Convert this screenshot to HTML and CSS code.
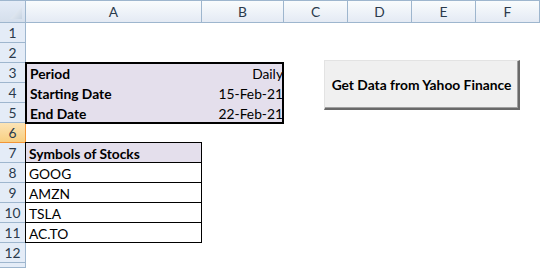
FILE: index.html
```html
<!DOCTYPE html>
<html lang="en">
<head>
	<meta charset="UTF-8">
	<title>Stock Data Sheet</title>
	<link rel="stylesheet" href="styles.css">
</head>
<body>
	<div class="sheet">
		<div class="corner"></div>
		<div class="colhdr">A</div>
		<div class="colhdr">B</div>
		<div class="colhdr">C</div>
		<div class="colhdr">D</div>
		<div class="colhdr">E</div>
		<div class="colhdr">F</div>

		<div class="rowhdr r1">1</div>
		<div class="rowhdr r2">2</div>
		<div class="rowhdr r3">3</div>
		<div class="rowhdr r4">4</div>
		<div class="rowhdr r5">5</div>
		<div class="rowhdr r6 active">6</div>
		<div class="rowhdr r7">7</div>
		<div class="rowhdr r8">8</div>
		<div class="rowhdr r9">9</div>
		<div class="rowhdr r10">10</div>
		<div class="rowhdr r11">11</div>
		<div class="rowhdr r12">12</div>
		<div class="rowhdr r13"></div>

		<div class="params">
			<div class="cell bold">Period</div>
			<div class="cell num">Daily</div>
			<div class="cell bold">Starting Date</div>
			<div class="cell num">15-Feb-21</div>
			<div class="cell bold">End Date</div>
			<div class="cell num">22-Feb-21</div>
		</div>

		<div class="symbols">
			<div class="cell bold head">Symbols of Stocks</div>
			<div class="cell">GOOG</div>
			<div class="cell">AMZN</div>
			<div class="cell">TSLA</div>
			<div class="cell">AC.TO</div>
		</div>

		<button class="fetch" type="button">Get Data from Yahoo Finance</button>
	</div>
</body>
</html>
```

FILE: styles.css
```css
html, body {
	margin: 0;
	padding: 0;
	background: #fff;
	overflow: hidden;
}
.sheet {
	position: relative;
	display: grid;
	grid-template-columns: 26px 176px 82px 64px 64px 64px 64px;
	grid-template-rows: 23px repeat(12, 20px) 5px;
	font-family: Lato, "Liberation Sans", sans-serif;
	font-size: 13.8px;
	color: #000;
	width: 540px;
	height: 268px;
	overflow: hidden;
}
.corner, .colhdr {
	box-sizing: border-box;
	border-top: 1px solid #9eb6ce;
	border-bottom: 1px solid #9eb6ce;
	border-right: 1px solid #9eb6ce;
	background: linear-gradient(#f9fcfd, #e4eaf4);
	color: #2a3a4c;
	text-align: center;
	line-height: 21px;
	grid-row: 1;
}
.corner {
	position: relative;
	background: linear-gradient(#e4ecf7, #d5dfec);
}
.corner::after {
	content: "";
	position: absolute;
	right: 3px;
	bottom: 3px;
	width: 12px;
	height: 12px;
	background: linear-gradient(135deg, #f6f8fb, #c6d3e2);
	clip-path: polygon(100% 0, 100% 100%, 0 100%);
}
.rowhdr {
	grid-column: 1;
	box-sizing: border-box;
	border-right: 1px solid #9eb6ce;
	border-bottom: 1px solid #9eb6ce;
	background: #e4ecf7;
	color: #2a3a4c;
	text-align: center;
	line-height: 19px;
}
.rowhdr.active {
	background: linear-gradient(#fce4b6, #f8cf81);
	border-right-color: #f29536;
	border-bottom-color: #f29536;
}
.r1 { grid-row: 2; }
.r2 { grid-row: 3; }
.r3 { grid-row: 4; }
.r4 { grid-row: 5; }
.r5 { grid-row: 6; }
.r6 { grid-row: 7; }
.r7 { grid-row: 8; }
.r8 { grid-row: 9; }
.r9 { grid-row: 10; }
.r10 { grid-row: 11; }
.r11 { grid-row: 12; }
.r12 { grid-row: 13; }
.r13 { grid-row: 14; }

.cell {
	padding: 0 3px;
	line-height: 20px;
	white-space: nowrap;
}
.bold {
	font-weight: bold;
}
.num {
	text-align: right;
	padding-right: 2px;
}

.params {
	grid-column: 2 / 4;
	grid-row: 4 / 7;
	display: grid;
	grid-template-columns: 176px 82px;
	grid-template-rows: repeat(3, 20px);
	margin: -1px 0 -1px -1px;
	border: 2px solid #000;
	background: #e4dfec;
}
.params .cell {
	line-height: 19px;
}

.symbols {
	grid-column: 2 / 3;
	grid-row: 8 / 13;
	display: grid;
	grid-template-rows: repeat(5, 20px);
	margin: -1px 0 0 -1px;
	border-left: 1px solid #000;
	border-right: 1px solid #000;
	border-top: 1px solid #000;
}
.symbols .cell {
	box-sizing: border-box;
	height: 20px;
	padding-top: 2px;
	border-bottom: 1px solid #000;
	line-height: 17px;
}
.symbols .head {
	background: #e4dfec;
}

.fetch {
	position: absolute;
	left: 324px;
	top: 60px;
	width: 196px;
	height: 50px;
	box-sizing: border-box;
	margin: 0;
	padding: 0;
	background: #f0f0f0;
	border-top: 1px solid #e3e3e3;
	border-left: 1px solid #e3e3e3;
	border-right: 2px solid #696969;
	border-bottom: 2px solid #696969;
	box-shadow: inset -1px -1px 0 #a0a0a0;
	font-family: Lato, "Liberation Sans", sans-serif;
	font-size: 13.8px;
	font-weight: bold;
	color: #000;
}
```
